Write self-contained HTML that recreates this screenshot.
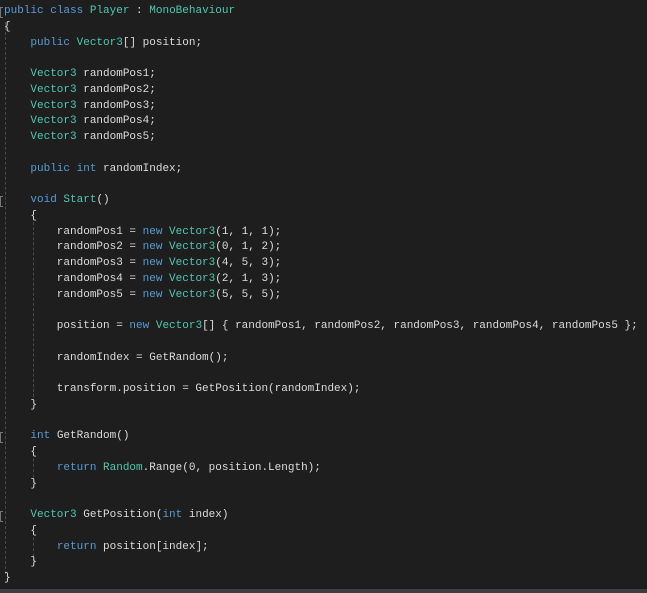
<!DOCTYPE html>
<html><head><style>
body{margin:0;width:647px;height:593px;background:#1e1e1e;overflow:hidden;position:relative}
pre{position:absolute;left:4px;top:4px;margin:0;font-family:"Liberation Mono",monospace;font-size:11px;line-height:15.75px;color:#dcdcdc;letter-spacing:0}
.k{color:#569cd6}.t{color:#4ec9b0}
.g{position:absolute;width:0;border-left:1px dashed #4a4a4a}
.m{position:absolute;left:0;width:2px;height:9px;border:1px solid #777;border-right:none}
.bar{position:absolute;left:0;right:0;bottom:0;height:4px;background:#3e3e42}
</style></head><body>
<div class="g" style="left:5px;top:22px;height:552px"></div>
<div class="g" style="left:33px;top:217px;height:180px"></div>
<div class="g" style="left:33px;top:453px;height:30px"></div>
<div class="g" style="left:33px;top:532px;height:30px"></div>
<div class="m" style="top:7px"></div>
<div class="m" style="top:196px"></div>
<div class="m" style="top:432px"></div>
<div class="m" style="top:511px"></div>
<pre><span class="k">public</span> <span class="k">class</span> <span class="t">Player</span> : <span class="t">MonoBehaviour</span>
{
    <span class="k">public</span> <span class="t">Vector3</span>[] position;

    <span class="t">Vector3</span> randomPos1;
    <span class="t">Vector3</span> randomPos2;
    <span class="t">Vector3</span> randomPos3;
    <span class="t">Vector3</span> randomPos4;
    <span class="t">Vector3</span> randomPos5;

    <span class="k">public</span> <span class="k">int</span> randomIndex;

    <span class="k">void</span> <span class="t">Start</span>()
    {
        randomPos1 = <span class="k">new</span> <span class="t">Vector3</span>(1, 1, 1);
        randomPos2 = <span class="k">new</span> <span class="t">Vector3</span>(0, 1, 2);
        randomPos3 = <span class="k">new</span> <span class="t">Vector3</span>(4, 5, 3);
        randomPos4 = <span class="k">new</span> <span class="t">Vector3</span>(2, 1, 3);
        randomPos5 = <span class="k">new</span> <span class="t">Vector3</span>(5, 5, 5);

        position = <span class="k">new</span> <span class="t">Vector3</span>[] { randomPos1, randomPos2, randomPos3, randomPos4, randomPos5 };

        randomIndex = GetRandom();

        transform.position = GetPosition(randomIndex);
    }

    <span class="k">int</span> GetRandom()
    {
        <span class="k">return</span> <span class="t">Random</span>.Range(0, position.Length);
    }

    <span class="t">Vector3</span> GetPosition(<span class="k">int</span> index)
    {
        <span class="k">return</span> position[index];
    }
}</pre>
<div class="bar"></div>
</body></html>
